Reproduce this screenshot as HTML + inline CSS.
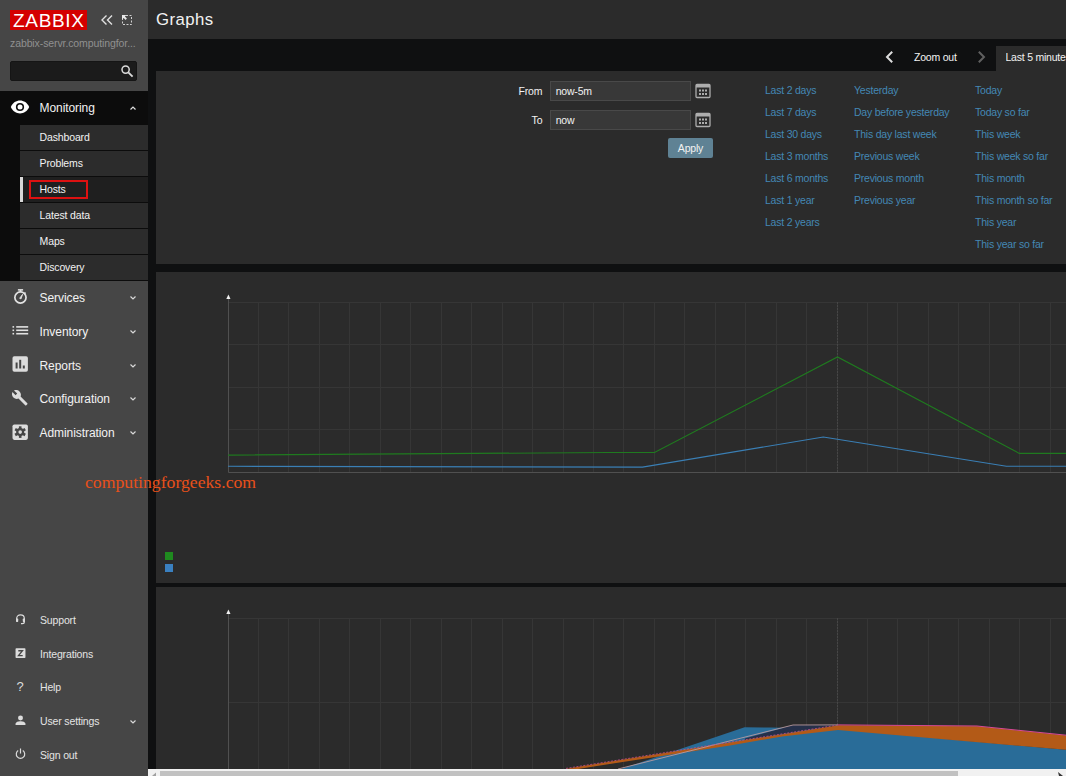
<!DOCTYPE html>
<html><head><meta charset="utf-8">
<style>
*{box-sizing:border-box;margin:0;padding:0}
html,body{width:1068px;height:776px;overflow:hidden;background:#0f1011;font-family:"Liberation Sans",Arial,sans-serif;color:#f2f2f2}
body{position:relative}
.abs{position:absolute}
#side{left:0;top:0;width:147.500px;height:776px;background:#464646}
#logo{left:10px;top:10px;width:77px;height:20px;background:#d40000;color:#fff;font-size:19px;line-height:21px;letter-spacing:0.65px;text-indent:0.6px;text-align:center}
#srv{left:10px;top:37px;font-size:10.5px;letter-spacing:-0.1px;color:#909090;white-space:nowrap}
#search{left:10px;top:61px;width:127px;height:20px;background:#1b1b1b;border:1px solid #151515;border-radius:2px}
#mon{left:0;top:90.500px;width:148px;height:190px;background:#0c0c0c}
.mi{left:39.500px;font-size:12px;letter-spacing:-0.07px;color:#f2f2f2;white-space:nowrap}
.sub{left:20px;width:128px;height:25px;background:#2c2c2c;font-size:10.5px;letter-spacing:-0.15px;color:#f2f2f2;line-height:25px;padding-left:19.600px}
.bi{left:40px;font-size:10.5px;letter-spacing:-0.15px;color:#e4e4e4;white-space:nowrap}
#main{left:148px;top:0;width:918px;height:776px;background:#0f1011}
#hdr{left:148px;top:0;width:918px;height:39px;background:#2b2b2b}
#title{left:156px;top:9.500px;font-size:16.8px;letter-spacing:0.4px;line-height:20px;color:#f2f2f2}
.panel{background:#2b2b2b}
.lnk{font-size:10.5px;letter-spacing:-0.22px;color:#4488b5;white-space:nowrap}
.inp{background:#383838;border:1px solid #494949;height:20px;font-size:10.5px;letter-spacing:-0.2px;color:#f2f2f2;line-height:18px;padding-left:4.700px}
.lbl{font-size:10.5px;letter-spacing:-0.2px;color:#f2f2f2;text-align:right;width:40px}
</style></head><body>
<div id="main" class="abs"></div>
<div id="hdr" class="abs"></div>
<div id="title" class="abs">Graphs</div>
<div class="abs" style="left:1066px;top:0;width:2px;height:776px;background:#fff"></div>

<div id="side" class="abs"></div>
<div id="logo" class="abs">ZABBIX</div>
<svg class="abs" style="left:100px;top:13px" width="34" height="14" viewBox="0 0 34 14">
<path d="M6.500 2.500 L2 7 L6.500 11.500 M12 2.500 L7.500 7 L12 11.500" fill="none" stroke="#e0e0e0" stroke-width="1.400"/>
<rect x="22.5" y="2.5" width="9" height="9" fill="none" stroke="#d0d0d0" stroke-width="1" stroke-dasharray="2 1.5"/>
<path d="M22 2 h4.5 l-1.6 1.6 l2 2 l-1.3 1.3 l-2 -2 l-1.6 1.6z" fill="#e8e8e8"/>
</svg>
<div id="srv" class="abs">zabbix-servr.computingfor...</div>
<div id="search" class="abs"></div>
<svg class="abs" style="left:120px;top:64px" width="15" height="15" viewBox="0 0 15 15"><circle cx="5.6" cy="5.6" r="3.6" fill="none" stroke="#dcdcdc" stroke-width="1.5"/><path d="M8.3 8.3 L12.6 12.6" stroke="#dcdcdc" stroke-width="1.8"/></svg>
<div id="mon" class="abs"></div>
<svg class="abs" style="left:10px;top:100px" width="20" height="14" viewBox="0 0 20 14"><path d="M0.800 7 C4.500 -1.600 15.500 -1.600 19.200 7 C15.500 15.600 4.500 15.600 0.800 7Z" fill="#fff"/><circle cx="10" cy="7" r="4.100" fill="#0c0c0c"/><circle cx="10" cy="7" r="2.500" fill="#fff"/></svg>
<div class="abs mi" style="top:101px">Monitoring</div>
<svg class="abs" style="left:129px;top:105px" width="8" height="6" viewBox="0 0 8 6"><path d="M1.500 4.500 L4 2 L6.500 4.500" fill="none" stroke="#e0e0e0" stroke-width="1.200"/></svg>
<div class="abs sub" style="top:125px">Dashboard</div>
<div class="abs sub" style="top:151px">Problems</div>
<div class="abs sub" style="top:177px;background:#1f1f1f;border-left:3px solid #d8d8d8;padding-left:16.600px">Hosts</div>
<div class="abs" style="left:29px;top:179.500px;width:59px;height:19px;border:2px solid #dd1111"></div>
<div class="abs sub" style="top:203px">Latest data</div>
<div class="abs sub" style="top:229px">Maps</div>
<div class="abs sub" style="top:255px">Discovery</div>
<div class="abs mi" style="top:291px">Services</div>
<svg class="abs" style="left:129px;top:295px" width="8" height="6" viewBox="0 0 8 6"><path d="M1.500 1.500 L4 4 L6.500 1.500" fill="none" stroke="#d8d8d8" stroke-width="1.200"/></svg>
<div class="abs mi" style="top:325px">Inventory</div>
<svg class="abs" style="left:129px;top:329px" width="8" height="6" viewBox="0 0 8 6"><path d="M1.500 1.500 L4 4 L6.500 1.500" fill="none" stroke="#d8d8d8" stroke-width="1.200"/></svg>
<div class="abs mi" style="top:359px">Reports</div>
<svg class="abs" style="left:129px;top:363px" width="8" height="6" viewBox="0 0 8 6"><path d="M1.500 1.500 L4 4 L6.500 1.500" fill="none" stroke="#d8d8d8" stroke-width="1.200"/></svg>
<div class="abs mi" style="top:392px">Configuration</div>
<svg class="abs" style="left:129px;top:396px" width="8" height="6" viewBox="0 0 8 6"><path d="M1.500 1.500 L4 4 L6.500 1.500" fill="none" stroke="#d8d8d8" stroke-width="1.200"/></svg>
<div class="abs mi" style="top:426px">Administration</div>
<svg class="abs" style="left:129px;top:430px" width="8" height="6" viewBox="0 0 8 6"><path d="M1.500 1.500 L4 4 L6.500 1.500" fill="none" stroke="#d8d8d8" stroke-width="1.200"/></svg>
<div class="abs bi" style="top:614px">Support</div>
<div class="abs bi" style="top:648px">Integrations</div>
<div class="abs bi" style="top:681px">Help</div>
<div class="abs bi" style="top:715px">User settings</div>
<div class="abs bi" style="top:749px">Sign out</div>
<svg class="abs" style="left:129px;top:719px" width="8" height="6" viewBox="0 0 8 6"><path d="M1.500 1.500 L4 4 L6.500 1.500" fill="none" stroke="#d8d8d8" stroke-width="1.200"/></svg>


<div class="abs panel" style="left:156px;top:71px;width:910px;height:193px"></div>
<div class="abs panel" style="left:996px;top:46px;width:70px;height:26px"></div>
<svg class="abs" style="left:884px;top:50px" width="11" height="14" viewBox="0 0 11 14"><path d="M8.200 1.700 L3 7 L8.200 12.300" fill="none" stroke="#dcdcdc" stroke-width="2"/></svg>
<div class="abs" style="left:914px;top:51px;font-size:10.5px;letter-spacing:-0.22px;color:#f2f2f2;white-space:nowrap">Zoom out</div>
<svg class="abs" style="left:976px;top:50px" width="11" height="14" viewBox="0 0 11 14"><path d="M2.800 1.700 L8 7 L2.800 12.300" fill="none" stroke="#606060" stroke-width="2"/></svg>
<div class="abs" style="left:1005.500px;top:51px;width:60.500px;overflow:hidden;font-size:10.5px;letter-spacing:-0.22px;color:#f2f2f2;white-space:nowrap">Last 5 minutes</div>
<div class="abs lbl" style="left:502.300px;top:84.500px">From</div>
<div class="abs lbl" style="left:502.300px;top:113.500px">To</div>
<div class="abs inp" style="left:550px;top:81px;width:141px">now-5m</div>
<div class="abs inp" style="left:550px;top:110px;width:141px">now</div>
<div class="abs" style="left:668px;top:138px;width:45px;height:20px;background:#5f8294;border-radius:2px;font-size:10.5px;letter-spacing:-0.2px;line-height:20px;text-align:center;color:#f2f2f2">Apply</div>
<svg class="abs" style="left:695px;top:83px" width="16" height="16" viewBox="0 0 16 16"><rect x="1" y="1.500" width="14" height="13" rx="1" fill="none" stroke="#adadad" stroke-width="1.300"/><rect x="1" y="1.500" width="14" height="3" fill="#adadad"/><g fill="#adadad"><rect x="4" y="6.500" width="2" height="2"/><rect x="7" y="6.500" width="2" height="2"/><rect x="10" y="6.500" width="2" height="2"/><rect x="4" y="10" width="2" height="2"/><rect x="7" y="10" width="2" height="2"/><rect x="10" y="10" width="2" height="2"/></g></svg>
<svg class="abs" style="left:695px;top:112px" width="16" height="16" viewBox="0 0 16 16"><rect x="1" y="1.500" width="14" height="13" rx="1" fill="none" stroke="#adadad" stroke-width="1.300"/><rect x="1" y="1.500" width="14" height="3" fill="#adadad"/><g fill="#adadad"><rect x="4" y="6.500" width="2" height="2"/><rect x="7" y="6.500" width="2" height="2"/><rect x="10" y="6.500" width="2" height="2"/><rect x="4" y="10" width="2" height="2"/><rect x="7" y="10" width="2" height="2"/><rect x="10" y="10" width="2" height="2"/></g></svg>
<div class="abs lnk" style="left:765px;top:84px">Last 2 days</div>
<div class="abs lnk" style="left:765px;top:106px">Last 7 days</div>
<div class="abs lnk" style="left:765px;top:128px">Last 30 days</div>
<div class="abs lnk" style="left:765px;top:150px">Last 3 months</div>
<div class="abs lnk" style="left:765px;top:172px">Last 6 months</div>
<div class="abs lnk" style="left:765px;top:194px">Last 1 year</div>
<div class="abs lnk" style="left:765px;top:216px">Last 2 years</div>
<div class="abs lnk" style="left:854px;top:84px">Yesterday</div>
<div class="abs lnk" style="left:854px;top:106px">Day before yesterday</div>
<div class="abs lnk" style="left:854px;top:128px">This day last week</div>
<div class="abs lnk" style="left:854px;top:150px">Previous week</div>
<div class="abs lnk" style="left:854px;top:172px">Previous month</div>
<div class="abs lnk" style="left:854px;top:194px">Previous year</div>
<div class="abs lnk" style="left:975px;top:84px">Today</div>
<div class="abs lnk" style="left:975px;top:106px">Today so far</div>
<div class="abs lnk" style="left:975px;top:128px">This week</div>
<div class="abs lnk" style="left:975px;top:150px">This week so far</div>
<div class="abs lnk" style="left:975px;top:172px">This month</div>
<div class="abs lnk" style="left:975px;top:194px">This month so far</div>
<div class="abs lnk" style="left:975px;top:216px">This year</div>
<div class="abs lnk" style="left:975px;top:238px">This year so far</div>

<div class="abs panel" style="left:156px;top:272px;width:910px;height:310.500px"></div>
<svg class="abs" style="left:0;top:0" width="1066" height="776" viewBox="0 0 1066 776"><g stroke="#363636" stroke-width="1" shape-rendering="crispEdges"><line x1="258.4" y1="302" x2="258.4" y2="472"/><line x1="288.9" y1="302" x2="288.9" y2="472"/><line x1="319.4" y1="302" x2="319.4" y2="472"/><line x1="349.8" y1="302" x2="349.8" y2="472"/><line x1="380.2" y1="302" x2="380.2" y2="472"/><line x1="410.7" y1="302" x2="410.7" y2="472"/><line x1="441.1" y1="302" x2="441.1" y2="472"/><line x1="471.6" y1="302" x2="471.6" y2="472"/><line x1="502.1" y1="302" x2="502.1" y2="472"/><line x1="532.5" y1="302" x2="532.5" y2="472"/><line x1="563.0" y1="302" x2="563.0" y2="472"/><line x1="593.4" y1="302" x2="593.4" y2="472"/><line x1="623.8" y1="302" x2="623.8" y2="472"/><line x1="654.3" y1="302" x2="654.3" y2="472"/><line x1="684.8" y1="302" x2="684.8" y2="472"/><line x1="715.2" y1="302" x2="715.2" y2="472"/><line x1="745.6" y1="302" x2="745.6" y2="472"/><line x1="776.1" y1="302" x2="776.1" y2="472"/><line x1="806.5" y1="302" x2="806.5" y2="472"/><line x1="837.0" y1="302" x2="837.0" y2="472"/><line x1="867.4" y1="302" x2="867.4" y2="472"/><line x1="897.9" y1="302" x2="897.9" y2="472"/><line x1="928.4" y1="302" x2="928.4" y2="472"/><line x1="958.8" y1="302" x2="958.8" y2="472"/><line x1="989.2" y1="302" x2="989.2" y2="472"/><line x1="1019.7" y1="302" x2="1019.7" y2="472"/><line x1="1050.2" y1="302" x2="1050.2" y2="472"/><line x1="228" y1="302" x2="1066" y2="302"/><line x1="228" y1="344.6" x2="1066" y2="344.6"/><line x1="228" y1="387.2" x2="1066" y2="387.2"/><line x1="228" y1="429.8" x2="1066" y2="429.8"/></g><path d="M837.500 302 V472" stroke="#464646" stroke-width="1" stroke-dasharray="2 1"/><path d="M228.500 298 V472.500 H1066" fill="none" stroke="#505050" stroke-width="1"/><path d="M226.300 299 L228.400 294.500 L230.500 299Z" fill="#f0f0f0"/><polyline points="228,455.100 608,452.500 654.500,452.500 837.500,356.900 1019.300,453.400 1066,453.400" fill="none" stroke="#1f7a1f" stroke-width="1.100"/><polyline points="228,466.300 642.500,467.100 823.300,437 1006.400,466.300 1066,466.300" fill="none" stroke="#3a7fb5" stroke-width="1.100"/><rect x="165" y="552" width="8" height="8" fill="#1f8a1f"/><rect x="165" y="564" width="8" height="8" fill="#3a80c0"/></svg>

<div class="abs panel" style="left:156px;top:587px;width:910px;height:182px"></div>
<svg class="abs" style="left:0;top:0" width="1066" height="769" viewBox="0 0 1066 769"><g stroke="#363636" stroke-width="1" shape-rendering="crispEdges"><line x1="258.4" y1="618" x2="258.4" y2="769"/><line x1="288.9" y1="618" x2="288.9" y2="769"/><line x1="319.4" y1="618" x2="319.4" y2="769"/><line x1="349.8" y1="618" x2="349.8" y2="769"/><line x1="380.2" y1="618" x2="380.2" y2="769"/><line x1="410.7" y1="618" x2="410.7" y2="769"/><line x1="441.1" y1="618" x2="441.1" y2="769"/><line x1="471.6" y1="618" x2="471.6" y2="769"/><line x1="502.1" y1="618" x2="502.1" y2="769"/><line x1="532.5" y1="618" x2="532.5" y2="769"/><line x1="563.0" y1="618" x2="563.0" y2="769"/><line x1="593.4" y1="618" x2="593.4" y2="769"/><line x1="623.8" y1="618" x2="623.8" y2="769"/><line x1="654.3" y1="618" x2="654.3" y2="769"/><line x1="684.8" y1="618" x2="684.8" y2="769"/><line x1="715.2" y1="618" x2="715.2" y2="769"/><line x1="745.6" y1="618" x2="745.6" y2="769"/><line x1="776.1" y1="618" x2="776.1" y2="769"/><line x1="806.5" y1="618" x2="806.5" y2="769"/><line x1="837.0" y1="618" x2="837.0" y2="769"/><line x1="867.4" y1="618" x2="867.4" y2="769"/><line x1="897.9" y1="618" x2="897.9" y2="769"/><line x1="928.4" y1="618" x2="928.4" y2="769"/><line x1="958.8" y1="618" x2="958.8" y2="769"/><line x1="989.2" y1="618" x2="989.2" y2="769"/><line x1="1019.7" y1="618" x2="1019.7" y2="769"/><line x1="1050.2" y1="618" x2="1050.2" y2="769"/><line x1="228" y1="618" x2="1066" y2="618"/><line x1="228" y1="702.7" x2="1066" y2="702.7"/></g><path d="M837.500 618 V769" stroke="#464646" stroke-width="1" stroke-dasharray="2 1"/><path d="M228.500 613 V769" fill="none" stroke="#505050" stroke-width="1"/><path d="M226.300 614 L228.400 609.500 L230.500 614Z" fill="#f0f0f0"/><polygon points="621,769 744.600,727.300 771,727.500 838,729 1066,749.800 1066,769" fill="#296c98"/><polygon points="745,738.500 793,725.300 838,725.300 745,740.200" fill="#26304a"/><polygon points="566,768.700 730,742.500 838.800,725.200 977,726.200 1066,735.400 1066,749.800 838,730 782,736.500 730,745.400 600,765.500 578,769" fill="#b35a17"/><polyline points="618,769 793,725 838,724.900" fill="none" stroke="#b89aa0" stroke-width="0.900"/><polyline points="566,768.400 730,742.200 838.800,724.900" fill="none" stroke="#c0508a" stroke-width="0.800" stroke-dasharray="2 1.500"/><polyline points="838,724.900 977,726 1066,735.200" fill="none" stroke="#d94a96" stroke-width="1"/></svg>
<div class="abs" style="left:148px;top:769px;width:918px;height:7px;background:#f1f1f1"></div>
<div class="abs" style="left:160px;top:771px;width:798px;height:5px;background:#c1c1c1"></div>
<svg class="abs" style="left:148px;top:769px" width="918" height="7" viewBox="0 0 918 7"><path d="M8 3.500 L4 7 H8Z" fill="#a0a0a0"/><path d="M910 3 L915 7 H911Z" fill="#333"/></svg>


<svg class="abs" style="left:12px;top:288px" width="17" height="17" viewBox="0 0 17 17"><circle cx="8.450" cy="9.500" r="5.600" fill="none" stroke="#e2e2e2" stroke-width="1.700"/><rect x="5.900" y="1.100" width="5.200" height="1.500" fill="#e2e2e2"/><rect x="7.600" y="2" width="1.800" height="2" fill="#e2e2e2"/><path d="M7.600 10.300 L10.600 6.300 L9 10.900Z" fill="#e2e2e2" stroke="#e2e2e2" stroke-width="0.800"/><path d="M12.500 4.300 l1.200 1.200" stroke="#e2e2e2" stroke-width="1.200"/></svg>
<svg class="abs" style="left:12px;top:325px" width="17" height="11" viewBox="0 0 17 11"><g fill="#e2e2e2"><rect x="0.500" y="1.100" width="1.600" height="1.600"/><rect x="4.200" y="1.100" width="12" height="1.600"/><rect x="0.500" y="4.500" width="1.600" height="1.600"/><rect x="4.200" y="4.500" width="12" height="1.600"/><rect x="0.500" y="7.900" width="1.600" height="1.600"/><rect x="4.200" y="7.900" width="12" height="1.600"/></g></svg>
<svg class="abs" style="left:12px;top:356px" width="16" height="16" viewBox="0 0 16 16"><rect x="0.500" y="0.200" width="15.400" height="15.500" rx="1.800" fill="#dcdcdc"/><g fill="#464646"><rect x="3.600" y="6.500" width="2" height="6"/><rect x="7.200" y="3.800" width="2" height="8.700"/><rect x="10.800" y="9.500" width="2" height="3"/></g></svg>
<svg class="abs" style="left:11px;top:389px" width="18" height="18" viewBox="0 0 18 18"><path d="M16.300 14.200 L9.600 7.500 C10.300 5.800 9.900 3.800 8.500 2.400 C7 0.900 4.800 0.600 3 1.400 L6.200 4.600 L4.600 6.200 L1.400 3 C0.600 4.800 0.900 7 2.400 8.500 C3.800 9.900 5.800 10.300 7.500 9.600 L14.200 16.300 C14.500 16.600 15 16.600 15.300 16.300 L16.300 15.300 C16.600 15 16.600 14.500 16.300 14.200Z" fill="#dcdcdc"/></svg>
<svg class="abs" style="left:12px;top:423.500px" width="16" height="16" viewBox="0 0 16 16"><rect x="0.500" y="0.400" width="15.400" height="15.500" rx="1.800" fill="#dcdcdc"/><g transform="translate(8.200 8.100)"><g fill="#464646"><circle r="4"/><rect x="-1.300" y="-5.800" width="2.600" height="11.600"/><rect x="-1.300" y="-5.800" width="2.600" height="11.600" transform="rotate(60)"/><rect x="-1.300" y="-5.800" width="2.600" height="11.600" transform="rotate(120)"/></g><circle r="1.800" fill="#dcdcdc"/></g></svg>
<svg class="abs" style="left:14.500px;top:614px" width="11" height="11" viewBox="0 0 12 12"><path d="M1.800 6.500 V5.200 C1.800 2.800 3.600 1 6 1 C8.400 1 10.200 2.800 10.200 5.200 V8.500 C10.200 9.800 9.300 10.600 8 10.600 H6.500" fill="none" stroke="#dcdcdc" stroke-width="1.300"/><rect x="1.100" y="5" width="2.400" height="3.600" rx="0.600" fill="#dcdcdc"/><rect x="8.500" y="5" width="2.400" height="3.600" rx="0.600" fill="#dcdcdc"/></svg>
<svg class="abs" style="left:14.500px;top:648px" width="11" height="11" viewBox="0 0 12 12"><rect x="0.600" y="0.200" width="10.800" height="10.800" rx="0.800" fill="#dcdcdc"/><path d="M3.600 3 H8.200 L3.800 8.300 H8.400" fill="none" stroke="#464646" stroke-width="1.400"/></svg>
<div class="abs" style="left:16.500px;top:679px;font-size:13px;line-height:15px;color:#dcdcdc">?</div>
<svg class="abs" style="left:14.500px;top:715px" width="11" height="11" viewBox="0 0 12 12"><circle cx="6" cy="3.200" r="2.700" fill="#dcdcdc"/><path d="M0.600 11 V9.500 C0.600 7.700 4 6.800 6 6.800 C8 6.800 11.400 7.700 11.400 9.500 V11Z" fill="#dcdcdc"/></svg>
<svg class="abs" style="left:14.500px;top:748px" width="11" height="12" viewBox="0 0 12 13"><path d="M3.500 2.800 A4.600 4.600 0 1 0 8.500 2.800" fill="none" stroke="#dcdcdc" stroke-width="1.300"/><path d="M6 0.500 V6" stroke="#dcdcdc" stroke-width="1.300"/></svg>
<div class="abs" style="left:85px;top:472px;font-family:'Liberation Serif',serif;font-size:17.7px;color:#e8501a;white-space:nowrap;line-height:20px">computingforgeeks.com</div>
</body></html>
